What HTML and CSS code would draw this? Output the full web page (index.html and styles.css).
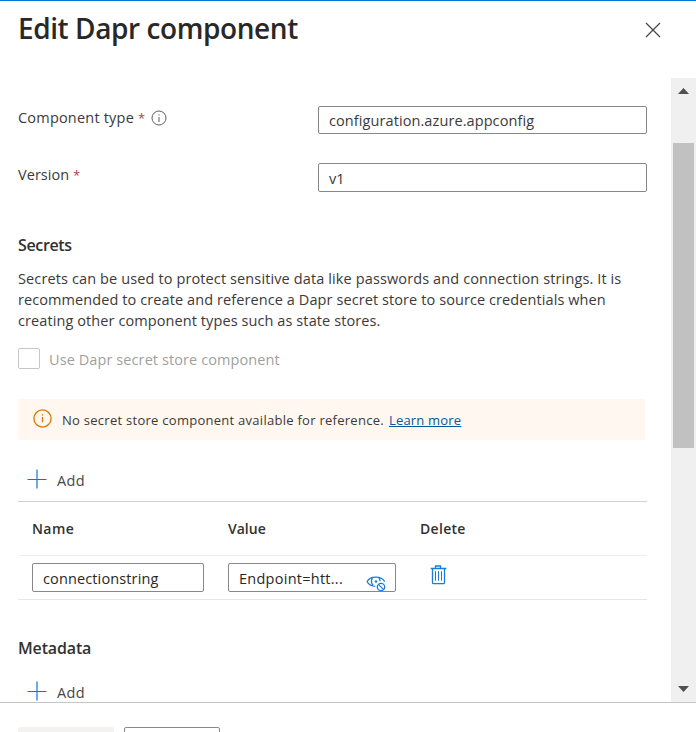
FILE: index.html
```html
<!DOCTYPE html>
<html lang="en">
<head>
<meta charset="utf-8">
<title>Edit Dapr component</title>
<link rel="stylesheet" href="styles.css">
</head>
<body>
<div class="panel">
  <header class="panel-header">
    <h1>Edit Dapr component</h1>
    <svg class="close" width="16" height="16" viewBox="0 0 16 16"><path d="M1 1 15 15M15 1 1 15"/></svg>
  </header>
  <div class="panel-body">
    <main class="content">
      <div class="field">
        <label>Component type <span class="required">*</span></label>
        <svg class="info" width="16" height="16" viewBox="0 0 16 16"><circle cx="8" cy="8" r="7"/><path d="M8 7v5M8 4.4v1.2"/></svg>
        <div class="input">configuration.azure.appconfig</div>
      </div>
      <div class="field field-version">
        <label>Version <span class="required">*</span></label>
        <div class="input">v1</div>
      </div>
      <h2>Secrets</h2>
      <p class="description"><span class="line1">Secrets can be used to protect sensitive data like passwords and connection strings. It is</span><br>recommended to create and reference a Dapr secret store to source credentials when<br>creating other component types such as state stores.</p>
      <div class="check-row"><span class="checkbox"></span><span class="check-label">Use Dapr secret store component</span></div>
      <div class="notice">
        <svg width="19" height="19" viewBox="0 0 19 19"><circle cx="9.5" cy="9.5" r="8.6"/><path d="M9.5 8v5.3M9.5 5.2v1.4"/></svg>
        <span class="notice-text">No secret store component available for reference.</span>
        <a class="notice-link">Learn more</a>
      </div>
      <div class="add">
        <svg width="20" height="20" viewBox="0 0 20 20"><path class="bar-v" d="M10 .5v19"/><path class="bar-h" d="M.5 10.5h19"/></svg>
        <span>Add</span>
      </div>
      <div class="table">
        <div class="row head"><span class="head-name">Name</span><span>Value</span><span>Delete</span></div>
        <div class="row entry">
          <div class="input name">connectionstring</div>
          <div class="input value"><span>Endpoint=htt...</span>
            <svg width="20" height="17" viewBox="0 0 20 17"><path d="M1 6.7C4 1 15 .3 18.7 6.7M1 6.7c2 3.2 4.8 4.6 8.3 4.6M6.6 3.2C4.6 5 5.2 9 7.3 10.2M12.7 3.2c1 .8 1.4 1.8 1.4 3"/><circle class="dot" cx="10" cy="6.5" r="1.2"/><circle cx="15" cy="12" r="3.7"/><path d="m12.4 9.4 5.2 5.2"/></svg>
          </div>
          <svg class="trash" width="17" height="20" viewBox="0 0 17 20"><path d="M.7 3.5h15.6M5.5 3V1h5v2M2.5 4v13.5c0 .7.4 1.2 1.2 1.2h9.6c.8 0 1.2-.5 1.2-1.2V4"/><path class="thin" d="M5.5 6.2v9.5M8.5 6.2v9.5M11.5 6.2v9.5"/></svg>
        </div>
      </div>
      <h2 class="metadata">Metadata</h2>
      <div class="add">
        <svg width="20" height="20" viewBox="0 0 20 20"><path class="bar-v" d="M10 .5v19"/><path class="bar-h" d="M.5 10.5h19"/></svg>
        <span>Add</span>
      </div>
    </main>
    <div class="scrollbar">
      <svg width="11" height="6" viewBox="0 0 11 6"><path d="M0 6 5.5 0 11 6z"/></svg>
      <div class="thumb"></div>
      <svg class="down" width="11" height="6" viewBox="0 0 11 6"><path d="M0 0 5.5 6 11 0z"/></svg>
    </div>
  </div>
  <footer class="panel-footer"><div class="button disabled"></div><div class="button outline"></div></footer>
</div>
</body>
</html>
```
FILE: styles.css
```css
* { box-sizing: border-box; }
body { margin: 0; overflow: hidden; background: #fff; color: #3b3a39; font: 14.5px/21px "Open Sans", "Noto Sans", sans-serif; letter-spacing: .09px; }
svg { display: block; flex: none; fill: none; }
.panel { display: flex; flex-direction: column; height: 732px; border-top: 1px solid #0078d4; white-space: nowrap; }
.panel-header { flex: none; display: flex; justify-content: space-between; height: 77px; padding: 8px 35px 0 18px; }
h1 { margin: 0; font-size: 28px; line-height: 39px; font-weight: 600; color: #292827; letter-spacing: -.42px; }
.close { margin-top: 13px; stroke: #444; stroke-width: 1.2; }
.panel-body { flex: none; display: flex; height: 624px; overflow: hidden; }
.content { width: 629px; margin-left: 18px; padding-top: 28px; }
.field { display: flex; height: 57px; }
.field label { line-height: 23px; letter-spacing: .2px; }
.field-version { height: 67px; }
.field-version label { letter-spacing: .05px; }
.required { color: #b5404a; font-size: 13px; }
.info { margin: 4px 0 0 6px; stroke: #605e5c; stroke-width: 1; }
.input { border: 1px solid #8a8886; border-radius: 2px; height: 28px; line-height: 28px; padding-left: 10px; }
.field .input { width: 329px; margin-left: auto; }
.field-version .input { height: 29px; line-height: 30px; }
h2 { margin: 0; font-size: 16px; line-height: 30px; height: 30px; font-weight: 600; color: #323130; letter-spacing: -.35px; }
.description { margin: 8px 0 0; }
.line1 { letter-spacing: .12px; }
.check-row { display: flex; height: 22px; margin-top: 17px; color: #a19f9d; line-height: 23px; }
.checkbox { width: 22px; height: 21px; border: 1px solid #c8c6c4; border-radius: 2px; margin-right: 9px; }
.notice { display: flex; width: 627px; height: 41px; margin-top: 29px; padding: 10px 15px; background: #fff7f0; font-size: 13px; line-height: 22px; letter-spacing: .27px; }
.notice svg { stroke: #db7500; stroke-width: 1.3; }
.notice-text { margin: 0 5px 0 10px; }
.notice-link { color: #005a9e; text-decoration: underline; letter-spacing: .2px; }
.add { display: flex; height: 61px; padding: 29px 0 0 9px; }
.add span { margin: 1px 0 0 10px; color: #484644; letter-spacing: .4px; }
.bar-v { stroke: #69aee7; stroke-width: 2; }
.bar-h { stroke: #0078d4; stroke-width: 1; }
.table { border-top: 1px solid #d2d0ce; }
.row { display: grid; grid-template-columns: 196px 192px 1fr; }
.head { height: 54px; padding-left: 14px; line-height: 53px; font-weight: 600; font-size: 14px; letter-spacing: 0; color: #323130; border-bottom: 1px solid #f0efee; }
.head > span:last-child { letter-spacing: .3px; }
.head .head-name { letter-spacing: .4px; }
.entry { height: 44px; padding: 7px 0 0 14px; border-bottom: 1px solid #e8e7e6; }
.entry .input { height: 29px; line-height: 30px; color: #292827; letter-spacing: .13px; }
.name { width: 172px; }
.value { width: 168px; display: flex; justify-content: space-between; padding-right: 9px; }
.entry .value { letter-spacing: .26px; }
.value svg { margin-top: 11px; stroke: #1b7ddb; stroke-width: 1.3; }
.dot { fill: #1b7ddb; stroke: none; }
.trash { margin: 2px 0 0 10px; stroke: #1b7ddb; stroke-width: 1.3; }
.thin { stroke-width: 1; }
.metadata { margin-top: 33px; letter-spacing: -.15px; }
.metadata + .add { padding-top: 18px; }
.scrollbar { width: 25px; margin-left: 24px; padding: 10px 2px; background: #f0f0f0; display: flex; flex-direction: column; align-items: center; }
.scrollbar svg { fill: #505050; }
.thumb { width: 21px; height: 305px; margin-top: 49px; background: #c1c1c1; }
.down { margin-top: auto; }
.panel-footer { flex: 1; display: flex; gap: 10px; padding: 24px 18px 0; border-top: 1px solid #c8c6c4; }
.button { width: 96px; height: 32px; border-radius: 2px; }
.disabled { background: #f3f2f1; }
.outline { border: 1px solid #8a8886; }
```
